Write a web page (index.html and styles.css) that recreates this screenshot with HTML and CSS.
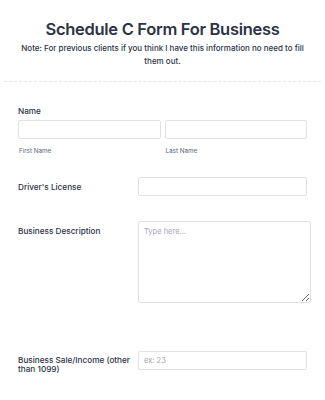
FILE: index.html
```
<!DOCTYPE html>
<html>
<head>
	<meta charset="utf-8">
	<title>Schedule C Form For Business</title>
	<link rel="stylesheet" href="styles.css">
</head>
<body>
<div class="form">
	<div class="form-header">
		<h1 class="form-title">Schedule C Form For Business</h1>
		<p class="form-note">Note: For previous clients if you think I have this information no need to fill them out.</p>
	</div>

	<div class="field field-name">
		<label class="field-label">Name</label>
		<div class="name-row">
			<div class="name-col">
				<input class="text-input" type="text">
				<span class="sub-label">First Name</span>
			</div>
			<div class="name-col">
				<input class="text-input" type="text">
				<span class="sub-label">Last Name</span>
			</div>
		</div>
	</div>

	<div class="field field-side field-license">
		<label class="field-label">Driver's License</label>
		<input class="text-input" type="text">
	</div>

	<div class="field field-side field-desc">
		<label class="field-label">Business Description</label>
		<textarea class="text-area" placeholder="Type here..."></textarea>
	</div>

	<div class="field field-side field-sale">
		<label class="field-label">Business Sale/Income (other than 1099)</label>
		<input class="text-input" type="text" placeholder="ex: 23">
	</div>
</div>
</body>
</html>
```

FILE: styles.css
```
body, p, h1 {
	margin: 0
}

body {
	background-color: #ffffff;
	font-family: Inter, "Liberation Sans", sans-serif;
	color: #2c3345;
}

input, textarea {
	outline: none;
	font-family: Inter, "Liberation Sans", sans-serif;
}

textarea {
	resize: vertical;
}

.form {
	padding: 0 18px 30px;
}

.form-header {
	margin: 0 -14px;
	padding: 18px 16px 13px;
	border-bottom: 1px dashed #e6e8ec;
	text-align: center;
}

.form-title {
	font-size: 16.5px;
	font-weight: 600;
	letter-spacing: -0.3px;
	line-height: 22px;
}

.form-note {
	margin-top: 2px;
	font-size: 8px;
	line-height: 13px;
	font-weight: 500;
}

.field-label {
	display: block;
	font-size: 8.2px;
	font-weight: 500;
	line-height: 10px;
}

.field-name {
	padding-top: 24px;
}

.field-name .field-label {
	margin-bottom: 4px;
}

.name-row {
	display: flex;
	gap: 4px;
}

.name-col {
	flex: 1;
	display: flex;
	flex-direction: column;
}

.text-input {
	box-sizing: border-box;
	width: 100%;
	height: 19px;
	padding: 0 5px;
	border: 1px solid #dfe1ec;
	border-radius: 2px;
	font-size: 7.5px;
	color: #2c3345;
}

.text-input::placeholder, .text-area::placeholder {
	color: #a3a6b3;
}

.sub-label {
	margin-top: 8px;
	padding-left: 1px;
	font-size: 6.3px;
	line-height: 8px;
	color: #57647e;
}

.field-side {
	display: flex;
	align-items: flex-start;
}

.field-side .field-label {
	flex: 0 0 120px;
	margin-top: 5px;
}

.field-side .text-input, .field-side .text-area {
	flex: 1;
}

.field-license {
	padding-top: 22px;
}

.field-desc {
	padding-top: 25px;
	margin-right: -4px;
}

.text-area {
	box-sizing: border-box;
	height: 82px;
	padding: 5px 5px;
	border: 1px solid #dfe1ec;
	border-radius: 2px;
	font-size: 7.5px;
	color: #2c3345;
}

.field-sale {
	padding-top: 48px;
}

.field-sale .field-label {
	line-height: 9px;
}
```
